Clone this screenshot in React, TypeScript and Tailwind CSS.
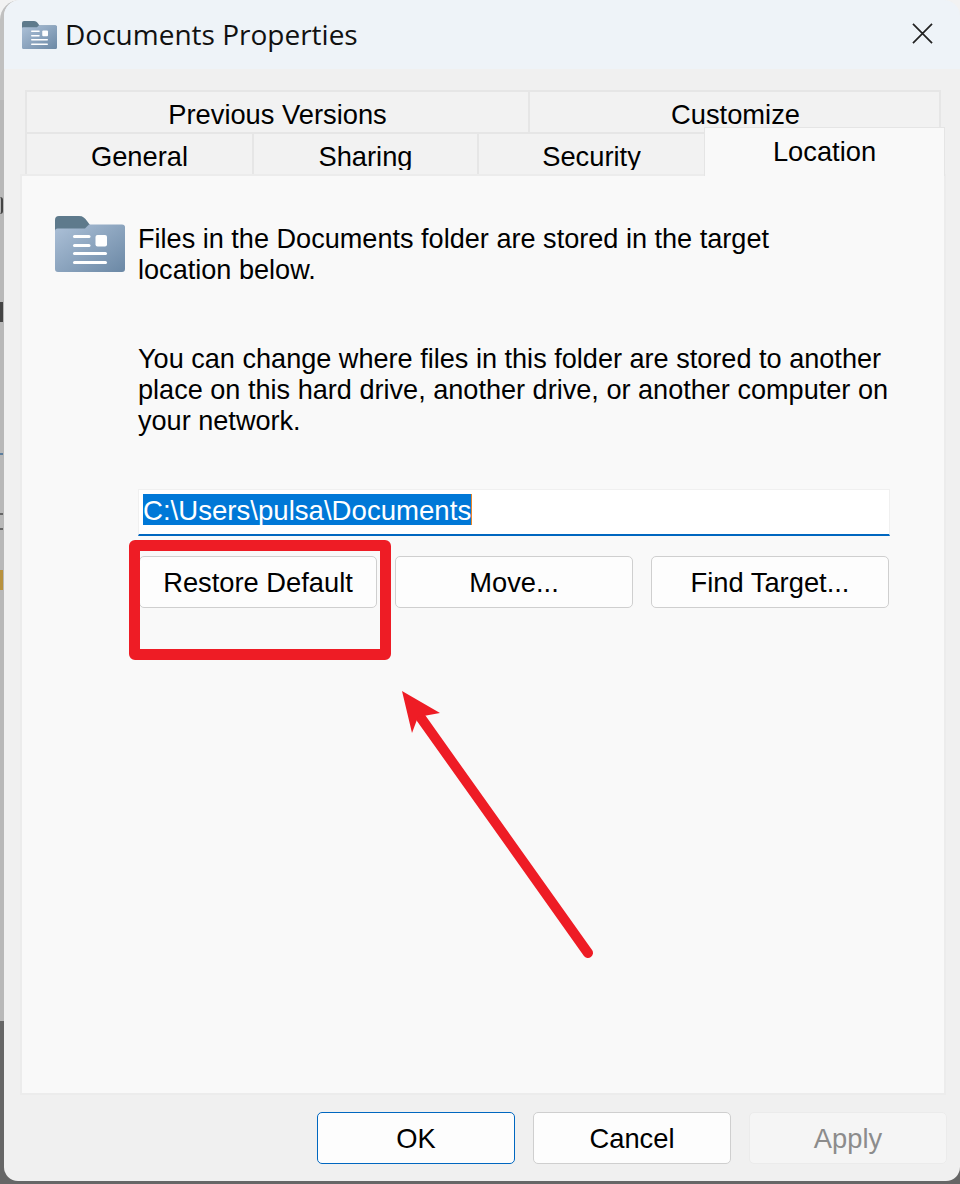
const sans = "font-['Liberation_Sans',Arial,sans-serif]";

function FolderIcon({ id, className }: { id: string; className: string }) {
  return (
    <svg viewBox="0 0 70 56" className={className}>
      <defs>
        <linearGradient id={id} x1="0" y1="0" x2="1" y2="1">
          <stop offset="0" stopColor="#adc1d8" />
          <stop offset="1" stopColor="#6b88a5" />
        </linearGradient>
      </defs>
      <path d="M0 4a4 4 0 0 1 4-4h20c4 0 6 2 8 5l3 4H66a4 4 0 0 1 4 4v10H0z" fill="#5e7a8c" />
      <path d="M0 15c0-1.500 1-2.500 2.500-2.500H30l4-4h33a3 3 0 0 1 3 3V53a3 3 0 0 1-3 3H3a3 3 0 0 1-3-3z" fill={`url(#${id})`} />
      <g fill="#fff">
        <rect x="18" y="19" width="17.500" height="3" rx="1.500" />
        <rect x="18" y="28" width="17.500" height="3" rx="1.500" />
        <rect x="18" y="36" width="34" height="3" rx="1.500" />
        <rect x="18" y="45" width="34" height="3" rx="1.500" />
        <rect x="40.500" y="19" width="11.500" height="11.500" rx="2" />
      </g>
    </svg>
  );
}

// the lower row of tabs has its descenders cut in the real dialog, hence clip
function Tab({ label, className, clip }: { label: string; className: string; clip?: boolean }) {
  return (
    <div className={`flex justify-center border-t-2 border-l-2 border-[#e6e6e6] bg-[#f2f2f2] text-[27.3px] leading-[31px] text-black ${className}`}>
      <span className={clip ? "mt-[7px] block h-[29px] overflow-hidden" : "mt-[7px] block"}>{label}</span>
    </div>
  );
}

function Btn({ label, className }: { label: string; className: string }) {
  return (
    <button className={`flex h-[52px] items-center justify-center rounded-[5px] border text-[27.3px] ${className}`}>
      {label}
    </button>
  );
}

export default function App() {
  return (
    <div className={`relative h-[1184px] w-[960px] overflow-hidden bg-[linear-gradient(#f2f2f2_50px,#b8b8b8_50px,#b8b8b8_1021px,#666_1021px)] ${sans}`}>
      {/* bits of whatever is behind the dialog */}
      <div className="absolute left-0 top-0 h-[100px] w-[960px] rounded-t-[20px] bg-[#c0c0c0]" />
      <div className="absolute left-0 top-[197px] h-[17px] w-[3px] rounded-r-full border-r-2 border-[#444]" />
      <div className="absolute left-0 top-[302px] h-[20px] w-[3px] bg-[#444]" />
      <div className="absolute left-0 top-[453px] h-[2px] w-[3px] bg-[#5d7f9e]" />
      <div className="absolute left-0 top-[513px] h-[17px] w-[3px] border-y-2 border-[#666]" />
      <div className="absolute left-0 top-[570px] h-[20px] w-[3px] bg-[#b8923f]" />

      {/* dialog window */}
      <div className="relative ml-[4px] flex h-[1181px] w-[956px] flex-col overflow-hidden rounded-t-[16px] rounded-b-[14px] bg-[#f0f0f0]">
        <div className="flex h-[69px] shrink-0 items-center bg-[#eef3f8] pl-[18px] pr-[27px]">
          <FolderIcon id="folder-small" className="h-[28px] w-[35px]" />
          <span className="mb-[2px] ml-[8px] font-['Open_Sans',sans-serif] text-[28px] text-[#111]">Documents Properties</span>
          <svg viewBox="0 0 22 22" className="mb-[2px] ml-auto h-[21px] w-[21px]" fill="none" stroke="#222" strokeWidth="1.800">
            <path d="M1 1l20 20M21 1L1 21" />
          </svg>
        </div>

        <div className="relative shrink-0 pl-[21px] pt-[21px]">
          <div className="flex h-[42px] w-[916px]">
            <Tab label="Previous Versions" className="w-[503px]" />
            <Tab label="Customize" className="flex-1 border-r-2 pl-[2px]" />
          </div>
          <div className="flex h-[42px]">
            <Tab label="General" clip className="w-[227px]" />
            <Tab label="Sharing" clip className="w-[225px]" />
            <Tab label="Security" clip className="w-[227px]" />
            <div className="relative z-10 -mt-[5px] mb-[-2px] flex h-[49px] w-[241px] justify-center border border-b-0 border-[#e5e5e5] bg-[#f9f9f9] pt-[8px] text-[27.3px] leading-[31px] text-black">
              Location
            </div>
          </div>
        </div>

        {/* page */}
        <div className="ml-[16px] flex h-[921px] w-[926px] shrink-0 flex-col border-2 border-[#ececec] bg-[#f9f9f9] pl-[116px] pr-[54px] text-[27.1px] leading-[31px] text-black">
          <div className="relative mt-[47px]">
            <FolderIcon id="folder-large" className="absolute -left-[83px] -top-[7px] h-[56px] w-[70px]" />
            <p>Files in the Documents folder are stored in the target<br />location below.</p>
          </div>
          <p className="mt-[58px]">You can change where files in this folder are stored to another<br />place on this hard drive, another drive, or another computer on<br />your network.</p>
          <div className="mt-[53px] flex h-[47px] items-start border border-b-2 border-[#f0f0f0] border-b-[#0067c0] bg-white pl-[4px] pt-[4px]">
            <span className="h-[31px] border-r border-[#e8862a] bg-[#0078d7] pt-[1px] text-[27.6px] text-white">C:\Users\pulsa\Documents</span>
          </div>
          <div className="mt-[20px] flex gap-[18px]">
            <Btn label="Restore Default" className="ml-px w-[238px] border-[#cfcfcf] bg-[#fdfdfd] pt-[1px] text-black" />
            <Btn label="Move..." className="w-[238px] border-[#cfcfcf] bg-[#fdfdfd] pt-[1px] text-black" />
            <Btn label="Find Target..." className="w-[238px] border-[#cfcfcf] bg-[#fdfdfd] pt-[1px] text-black" />
          </div>
        </div>

        <div className="flex justify-end gap-[18px] pr-[13px] pt-[17px]">
          <Btn label="OK" className="w-[198px] border-[#0067c0] bg-[#fdfdfd] pt-[3px] text-black" />
          <Btn label="Cancel" className="w-[198px] border-[#cfcfcf] bg-[#fdfdfd] pt-[3px] text-black" />
          <Btn label="Apply" className="w-[198px] border-[#ebebeb] bg-[#f5f5f5] pt-[3px] text-[#8c8c8c]" />
        </div>
      </div>

      {/* red annotation drawn over the dialog */}
      <div className="absolute left-[129px] top-[540px] h-[120px] w-[262px] rounded-[6px] border-[11px] border-[#ee1c25]" />
      <svg className="absolute left-0 top-0 h-[1184px] w-[960px]" viewBox="0 0 960 1184">
        <path d="M588 953L421 718" fill="none" stroke="#ee1c25" strokeWidth="10" strokeLinecap="round" />
        <path d="M402 691l38 22-22 4-6 16z" fill="#ee1c25" />
      </svg>
    </div>
  );
}
